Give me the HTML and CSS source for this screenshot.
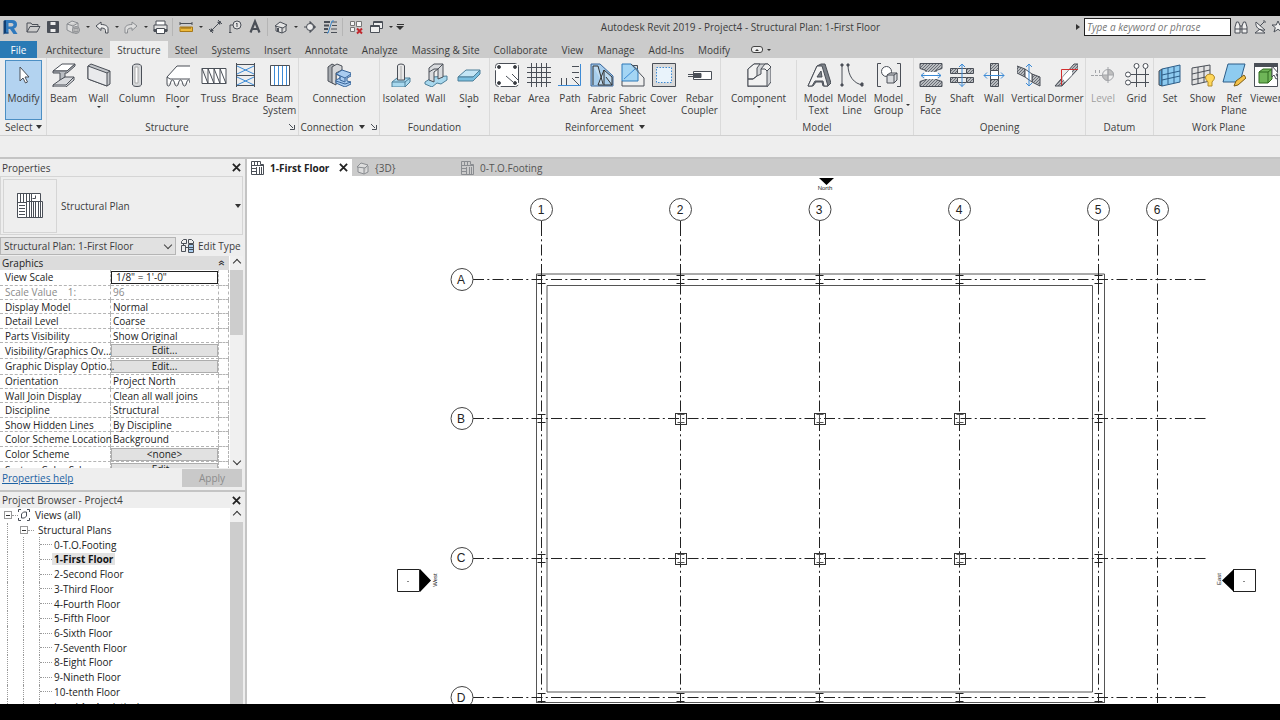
FILE: index.html
```html
<!DOCTYPE html>
<html lang="en">
<head>
<meta charset="utf-8">
<title>Autodesk Revit 2019 - Project4 - Structural Plan: 1-First Floor</title>
<link rel="stylesheet" href="styles.css">
</head>
<body>
<div class="app">
<header class="titlebar">
<div class="qat">
<button class="logo" aria-label="Application menu"><svg width="20" height="20" viewBox="0 0 20 20"><path d="M5 3h7q5 0 5 4.500 0 3-3 4l3.500 5.500h-4L10 12H8.500v4.500H5z" fill="#2f79bd"/><path d="M5 3L3.500 4v13.500L5 16.500h3.500v-1H6V4z" fill="#123f73"/><path d="M8.500 6h3q2 0 2 1.700t-2 1.700h-3z" fill="#cbcbcb"/></svg></button>
<button class="qb" aria-label="Open"><svg class="i" viewBox="0 0 20 20"><path d="M4 15V6h4l1 1.500h6V10M4 15l3-5.500h10L14 15z"/></svg></button>
<button class="qb" aria-label="Save"><svg class="i" viewBox="0 0 20 20"><path d="M4.500 4.500h11v11h-11z" fill="#4a4f57"/><path d="M7 4.500h6v4H7zM7 11.500h6v4H7z" fill="#eee"/></svg></button>
<button class="qb" aria-label="Synchronize"><svg class="i dim" viewBox="0 0 20 20"><path d="M4 7l5-3 6 2v8l-5 2-6-3zM4 7l6 2 5-3M10 9v7" fill="#ddd"/><circle cx="13" cy="13" r="3.500" fill="#bbb"/><path d="M11 12l2-1 2 1M11 14l2 1 2-1"/></svg></button>
<button class="drop" aria-label="Synchronize options"></button>
<button class="qb" aria-label="Undo"><svg class="i" viewBox="0 0 20 20"><path d="M4 9l5-4v2.500c5 0 7 2 7 4V16h-2.500v-2.500c0-2-2-2.500-4.500-2.500v2.500z" fill="#eee"/></svg></button>
<button class="drop" aria-label="Undo list"></button>
<button class="qb" aria-label="Redo"><svg class="i dim" viewBox="0 0 20 20"><path d="M16 9l-5-4v2.500c-5 0-7 2-7 4V16h2.500v-2.500c0-2 2-2.500 4.500-2.500v2.500z" fill="#ddd"/></svg></button>
<button class="drop" aria-label="Redo list"></button>
<button class="qb" aria-label="Print"><svg class="i" viewBox="0 0 20 20"><path d="M6 8V4h9v4" fill="#fff"/><path d="M4 8h13v6H4z" fill="#e4e4e4"/><path d="M4 12.500h13v2H4z" fill="#4a4f57"/><path d="M6.500 11.500h8v5h-8z" fill="#fff"/></svg></button>
<span class="qsep"></span>
<button class="qb" aria-label="Measure"><svg class="i" viewBox="0 0 20 20"><path d="M4 5v3M16 5v3M4 6.500h12"/><path d="M4 10h12.500v4.500H4z" fill="#edb93b" stroke="#a87918"/><path d="M6 10v2M8 10v2M10 10v2M12 10v2M14 10v2" stroke="#8a6212"/></svg></button>
<button class="drop" aria-label="Measure options"></button>
<button class="qb" aria-label="Aligned dimension"><svg class="i" viewBox="0 0 20 20"><path d="M6 14l9-9M4 12l4 4M13 3l4 4"/><path d="M5 15l1-4 3 3zM16 4l-1 4-3-3z" fill="#4a4f57" stroke="none"/></svg></button>
<button class="qb" aria-label="Tag by category"><svg class="i" viewBox="0 0 20 20"><circle cx="12" cy="8" r="4" fill="#e4e4e4"/><path d="M5 15V8h3M4 15.500h2.500M12 6v4M11 7l1-1"/></svg></button>
<button class="qb" aria-label="Text"><svg class="i" viewBox="0 0 20 20"><path d="M5.500 15.500L10 4.500l4.500 11M7.200 12h5.600" stroke-width="2.200"/></svg></button>
<span class="qsep"></span>
<button class="qb" aria-label="Default 3D view"><svg class="i" viewBox="0 0 20 20"><path d="M4 9l5-4 7 3-4 3zM5 9v5l6 2v-5M11 16l4-2V9" fill="#e3e3e3"/><path d="M7 11v4" stroke-width="2"/></svg></button>
<button class="drop" aria-label="3D view options"></button>
<button class="qb" aria-label="Section"><svg class="i" viewBox="0 0 20 20"><path d="M10 4.500v11l5.500-5.500zM4 10h3" fill="#4a4f57"/><circle cx="10" cy="10" r="3.500" fill="#eee"/></svg></button>
<button class="qb" aria-label="Thin lines"><svg class="i" viewBox="0 0 20 20"><path d="M4 5h6M4 8.500h5M4 12h4" stroke-width="2.200"/><path d="M4 15.500h4M12 5h5M12 8.500h5M11 12h6M11 15.500h6"/><path d="M14 4h-2L8 16h-1" stroke="#3c86c8"/></svg></button>
<span class="qsep"></span>
<button class="qb" aria-label="Close hidden windows"><svg class="i" viewBox="0 0 20 20"><path d="M4.500 4.500h4v4h-4zM10.500 4.500h5v5h-5zM4.500 10.500h4v4h-4z" fill="#f5f5f5" stroke="#777"/><path d="M11 11.500l5 5M16 11.500l-5 5" stroke="#c0272d" stroke-width="2"/></svg></button>
<button class="qb" aria-label="Switch windows"><svg class="i" viewBox="0 0 20 20"><path d="M7.500 8V4.500h9v7h-3M8 5.500h9" fill="#eee"/><path d="M4.500 8.500h9v7h-9zM4.500 9.500h9" fill="#eee"/></svg></button>
<button class="drop" aria-label="Window list"></button>
<button class="drop custom" aria-label="Customize toolbar"></button>
</div>
<h1 class="title">Autodesk Revit 2019 - Project4 - Structural Plan: 1-First Floor</h1>
<div class="info">
<span class="play"></span>
<input class="search" type="text" aria-label="Search" placeholder="Type a keyword or phrase">
<button class="qb" aria-label="Find"><svg class="i" viewBox="0 0 20 20"><path d="M4 16v-6l1.500-5h2L9 9v7zM11 16V9l1.500-4h2l1.500 5v6zM9 9h2M4 12h5M11 12h5M9 12h2" fill="#eee"/></svg></button>
<button class="qb" aria-label="Communication center"><svg class="i" viewBox="0 0 20 20"><path d="M6 5c-1 5 3 9 9 8zM10 9l4-4M5 16h10l-5-4zM13 4h2v2" fill="#eee"/></svg></button>
<button class="qb" aria-label="Favorites"><svg class="i" viewBox="0 0 20 20"><path d="M9 4l1.800 4H15l-3.300 2.600L13 15l-4-2.700L5 15l1.300-4.400L3 8h4.200z" fill="#eee"/></svg></button>
</div>
</header>
<nav class="tabs">
<button class="tab file">File</button><button class="tab">Architecture</button><button class="tab active">Structure</button><button class="tab">Steel</button><button class="tab">Systems</button><button class="tab">Insert</button><button class="tab">Annotate</button><button class="tab">Analyze</button><button class="tab">Massing &amp; Site</button><button class="tab">Collaborate</button><button class="tab">View</button><button class="tab">Manage</button><button class="tab">Add-Ins</button><button class="tab">Modify</button>
<button class="tab min" aria-label="Minimize ribbon"><span class="minbox"></span><span class="caret"></span></button>
</nav>
<section class="ribbon">
<div class="group g-select">
<div class="tools">
<button class="tool on"><svg class="i" viewBox="0 0 24 24"><path d="M8 4v14l3-3 2.500 5 2-1-2.500-5h4z" fill="#fff"/></svg>Modify</button>
</div>
<div class="gname">Select <span class="caret big"></span></div>
</div>
<div class="group g-structure">
<div class="tools">
<button class="tool"><svg class="i" viewBox="0 0 24 24"><path d="M1 8l9-7h13l-8 7z" fill="#fff"/><path d="M1 8v2h7v8l5-4v-4h2l8-7V1l-8 7z" fill="#b9bdc2"/><path d="M1 22l7-5 5-3h9v3l-8 7H1z" fill="#d9dbde"/><path d="M1 22h13l8-8"/></svg>Beam</button>
<button class="tool"><svg class="i" viewBox="0 0 24 24"><path d="M1 3l3-2 19 7v13l-3 2-19-7z" fill="#c3c6ca"/><path d="M1 3l19 7v13L1 16z" fill="#e9eaec"/><path d="M20 10l3-2"/></svg>Wall<span class="caret"></span></button>
<button class="tool"><svg class="i" viewBox="0 0 24 24"><path d="M7.500 4q0-3 4.500-3t4.500 3v17q0 2.500-4.500 2.500T7.500 21z" fill="#d6d8da"/><path d="M10 4h3v16h-3z" fill="#fff" stroke="#aaa"/></svg>Column</button>
<button class="tool"><svg class="i" viewBox="0 0 24 24"><path d="M1 14L11 3h13v17H1z" fill="#fff" stroke="none"/><path d="M24 3H11L1 14v7M1 14l3 2h20M1 21q0 2 1.500 2t2-3 2-3 2 3 2 3 2-3 2-3 2 3 2 3 2-3 2-3 1.500 3"/></svg>Floor<span class="caret"></span></button>
<button class="tool"><svg class="i wide" viewBox="0 0 26 24"><path d="M1 5.500h24v15H1zM1 5.500l6 15v-15l6 15v-15l6 15v-15l6 15" fill="#fff"/></svg>Truss</button>
<button class="tool"><svg class="i" viewBox="0 0 24 24"><path d="M3.500 0v24M21.500 0v24M3 1.500h18M3 12.500h18M3 22.500h18"/><path d="M4 3l17 8M21 3L4 11M4 14l17 8M21 14L4 22" class="b"/></svg>Brace</button>
<button class="tool"><svg class="i" viewBox="0 0 24 24"><path d="M2.500 2.500h19v20h-19z" fill="#fff"/><path d="M6.500 3v19M10.500 3v19M14.500 3v19M18.500 3v19" class="b"/></svg>Beam<br>System</button>
</div>
<div class="gname"><span class="grow">Structure</span><svg class="i launch" viewBox="0 0 8 8"><path d="M1 1l4 4M6.500 2v4.500H2"/></svg></div>
</div>
<div class="group g-connection">
<div class="tools">
<button class="tool"><svg class="i" viewBox="0 0 24 24"><path d="M1 4l4-3 4 2v18l-4-1-4-2z" fill="#a7abb0"/><path d="M5 4l5-3 5 2v4l-6 3v12l-4-2z" fill="#d5d7da"/><path d="M9 11l6-4 9 3v3l-4 2v3l4 1v2l-6 3-9-4v-3l4-2v-2z" fill="#a9ccf0" stroke="#38659a"/><path d="M9 11l9 4 6-4M13 14v3l5 2v-4M9 18l9 3 6-2" stroke="#38659a"/></svg>Connection</button>
</div>
<div class="gname"><span>Connection</span><span class="caret big"></span><svg class="i launch" viewBox="0 0 8 8"><path d="M1 1l4 4M6.500 2v4.500H2"/></svg></div>
</div>
<div class="group g-foundation">
<div class="tools">
<button class="tool"><svg class="i" viewBox="0 0 24 24"><path d="M3 19l5-4h13v4l-5 5H3z" fill="#a8d8ee" stroke="#4d7f99"/><path d="M3 19h13l5-4M16 19v5" stroke="#4d7f99"/><path d="M8.500 3q0-2 3.500-2t3.500 2v14H8.500z" fill="#e8e8e8"/><path d="M12 3v13" stroke="#aaa"/></svg>Isolated</button>
<button class="tool"><svg class="i" viewBox="0 0 24 24"><path d="M1 19l8-5 14-1v4l-6 4-4-1-5 4-7-3z" fill="#a8d8ee" stroke="#4d7f99"/><path d="M5 17V5l5-4h9v13l-5 2V6l-4 3v10z" fill="#d9dbde"/><path d="M14 6h-4l-5 3M14 6l5-5"/></svg>Wall</button>
<button class="tool"><svg class="i" viewBox="0 0 24 24"><path d="M1 14l8-7h14l-7 7z" fill="#c3e5f5" stroke="#4d7f99"/><path d="M1 14v4h15l7-7V7l-7 7z" fill="#79bfe0" stroke="#4d7f99"/></svg>Slab<span class="caret"></span></button>
</div>
<div class="gname">Foundation</div>
</div>
<div class="group g-reinforcement">
<div class="tools">
<button class="tool"><svg class="i" viewBox="0 0 24 24"><rect x=".5" y=".5" width="23" height="23" rx="3" fill="#fff" stroke-dasharray="18 2"/><g fill="#333"><circle cx="4" cy="4" r="1.500"/><circle cx="20" cy="4" r="1.500"/><circle cx="4" cy="20" r="1.500"/><circle cx="20" cy="20" r="1.500"/></g><path d="M11 13l7 6M17 11l6 6"/></svg>Rebar</button>
<button class="tool"><svg class="i" viewBox="0 0 24 24"><path d="M4.500 0v24M9.500 0v24M14.500 0v24M19.500 0v24M0 4.500h24M0 9.500h24M0 14.500h24M0 19.500h24"/></svg>Area</button>
<button class="tool"><svg class="i" viewBox="0 0 24 24"><path d="M0 22.500h22.500V1" class="b"/><path d="M3.500 22v-7M8.500 22v-7M14 15l7 7M21 3.500h-7M21 9.500h-7M21 14.500h-4"/></svg>Path</button>
<button class="tool"><svg class="i" viewBox="0 0 24 24"><path d="M1 1h9l13 12v10H1z" fill="#a7cdec" stroke="#38659a"/><path d="M3 3h5l5 18M3 3v19M8 22L14 7v15M14 7l8 7v8l-6-8M8 22h14" stroke="#333" fill="#d9e9f6" fill-opacity=".5"/></svg>Fabric<br>Area</button>
<button class="tool"><svg class="i" viewBox="0 0 24 24"><path d="M8.500 2.500h8v8" fill="#ddd"/><path d="M1 1h9l7 6v11H1z" fill="#a4d5f4" stroke="#2c78b8"/><path d="M3 16L14 6" class="b"/><path d="M1 18v5h22v-8L10 1"/></svg>Fabric<br>Sheet</button>
<button class="tool"><svg class="i" viewBox="0 0 24 24"><path d="M.5.500h23v23H.5z" fill="#d9d9d9"/><path d="M4.500 4.500h15v15h-15z" fill="#e9f3fb" class="b" stroke-dasharray="1.500 1.500"/></svg>Cover</button>
<button class="tool"><svg class="i" viewBox="0 0 24 24"><path d="M5.500 8.500h18v8h-18z" fill="#fff"/><path d="M0 11.500h8M0 13.500h8"/><path d="M6 10.500h7v4H6z" fill="#4a4f57"/></svg>Rebar<br>Coupler</button>
</div>
<div class="gname">Reinforcement <span class="caret big"></span></div>
</div>
<div class="group g-model">
<div class="tools">
<button class="tool component"><svg class="i" viewBox="0 0 24 24"><path d="M1 6l6-5h14l3 3v15l-4 5H1z" fill="#d2d4d7"/><path d="M1 6l6-5h6l-3 4v8l-4 3H1zM10 13l4-2V6l4-5h3l3 3-4 4v15H1v-7h5z" fill="#f2f2f2"/><path d="M14 6q5-1 6 2"/></svg>Component<span class="caret"></span></button>
<button class="tool"><svg class="i" viewBox="0 0 24 24"><path d="M10 3l4-2h4l6 19-3 3h-5l-1-4H9l-3 4H1z" fill="#7b8087"/><path d="M1 23L10 3h5l6 20h-4l-1-5H8l-3 5zM10 14h5l-1-6z" fill="#f3f3f3"/></svg>Model<br>Text</button>
<button class="tool"><svg class="i" viewBox="0 0 24 24"><path d="M2 2v20M8 2c0 11 6 19 15 20"/><path d="M1 1h2v2H1zM1 21h2v2H1zM7 1h2v2H7zM21 20h2v3h-2z" fill="#4a4f57"/></svg>Model<br>Line</button>
<button class="tool menu"><svg class="i" viewBox="0 0 24 24"><path d="M4 .5H.5v23H4M20 .5h3.500v23H20"/><circle cx="9.500" cy="8.500" r="5" fill="#fff"/><path d="M10 12l3-2h7v7l-3 3h-7z" fill="#d9dbde"/><path d="M10 12h7v8M17 12l3-2"/></svg>Model<br>Group<span class="caret"></span></button>
</div>
<div class="gname">Model</div>
</div>
<div class="group g-opening">
<div class="tools">
<button class="tool"><svg class="i" viewBox="0 0 24 24"><path d="M1 .5h22v5l-6 2v3H7v-3l-6-2zM1 23.500h22v-5l-6-2v-2H7v2l-6 2z" fill="url(#hatch)"/><path d="M6 9h12v7H6z" fill="#fff" stroke="none"/><path d="M2 12.500h20M5 10l-3 2.500L5 15M19 10l3 2.500-3 2.500" class="b"/></svg>By<br>Face</button>
<button class="tool"><svg class="i" viewBox="0 0 24 24"><path d="M.5 5.500h7v5h-7zM.5 14.500h7v5h-7zM16.500 5.500h7v5h-7zM16.500 14.500h7v5h-7z" fill="url(#hatch)"/><path d="M8 5.500h8M8 10.500h8M8 14.500h8M8 19.500h8"/><path d="M12 1v22.500M9 4l3-3 3 3M9 20.500l3 3 3-3" class="b"/></svg>Shaft</button>
<button class="tool"><svg class="i" viewBox="0 0 24 24"><path d="M8.500.5h8v7h-8zM8.500 16.500h8v7h-8z" fill="url(#hatch)"/><path d="M8.500 7.500h8v9h-8z" fill="#fff"/><path d="M2 12.500h20M5 9.500l-3 3 3 3M19 9.500l3 3-3 3" class="b"/></svg>Wall</button>
<button class="tool"><svg class="i" viewBox="0 0 24 24"><path d="M0 3l8 3v8l-8-4zM15 11l8 3v9l-8-4z" fill="url(#hatch)"/><path d="M8 6l7 5v8l-7-5z" fill="#fff"/><path d="M12 1v22M9 4l3-3 3 3M9 20l3 3 3-3" class="b"/></svg>Vertical</button>
<button class="tool"><svg class="i" viewBox="0 0 24 24"><path d="M1 23L20 1h4v5L8 23z" fill="url(#hatch)"/><path d="M8 15l7-8h3v5l-7 7z" fill="#fff" stroke="none"/><path d="M7.500 22V6.500H24" stroke="#d22f2f"/></svg>Dormer</button>
</div>
<div class="gname">Opening</div>
</div>
<div class="group g-datum">
<div class="tools">
<button class="tool" disabled><svg class="i" viewBox="0 0 24 24"><path d="M0 12.500h12M4.500 7v3M8.500 7v3" stroke-dasharray="3 1"/><circle cx="17" cy="12" r="5.500" fill="#eee"/><path d="M17 6.500V12h5.500A5.500 5.500 0 0 0 17 6.500zM17 17.500V12h-5.500A5.500 5.500 0 0 0 17 17.500z" fill="#888"/><path d="M17 4v16"/></svg>Level</button>
<button class="tool"><svg class="i" viewBox="0 0 24 24"><path d="M11.500 6v18M20.500 6v18M6 11.500h18M6 19.500h18"/><g fill="#fff"><circle cx="11.500" cy="3" r="2.500"/><circle cx="20.500" cy="3" r="2.500"/><circle cx="3" cy="11.500" r="2.500"/><circle cx="3" cy="19.500" r="2.500"/></g></svg>Grid</button>
</div>
<div class="gname">Datum</div>
</div>
<div class="group g-plane">
<div class="tools">
<button class="tool"><svg class="i" viewBox="0 0 24 24"><path d="M1 8l3-2v17l-3-1z" fill="#5aa5d6"/><path d="M4 6l18-4v17L4 23z" fill="#8ecbf0" stroke="#2c5d88"/><path d="M10 5v16M16 4v16M4 12l18-4M4 17l18-4" stroke="#2c5d88"/></svg>Set</button>
<button class="tool"><svg class="i" viewBox="0 0 24 24"><path d="M1 5l18-3v16L1 22z" fill="#e3e3e3"/><path d="M7 4v17M13 3v16M1 11l18-4M1 17l18-4"/><path d="M17 19q-3-3-2.500-5 1-3 4.500-3t4.500 3q.5 2-2.500 5v4h-4z" fill="#ffd75a" stroke="#b08a2a"/></svg>Show</button>
<button class="tool"><svg class="i" viewBox="0 0 24 24"><path d="M6 1h17l-5 18H1z" fill="#8ecbf0" stroke="#2c5d88"/><path d="M12 23l2-5 8-6 2 3-8 7z" fill="#f5c24a" stroke="#7b5c14"/></svg>Ref<br>Plane</button>
<button class="tool"><svg class="i" viewBox="0 0 24 24"><path d="M.5.500h23v23H.5z" fill="#fff"/><path d="M.5.500h23v3H.5z" fill="#4a4f57"/><path d="M5 9l4-3h9v10l-4 4H5z" fill="#6fb558" stroke="#2f6b1e"/><path d="M5 9h9v11M14 9l4-3" stroke="#2f6b1e"/><path d="M18 3v11l2-2 2 4 2-1-2-4h3z" fill="#fff"/></svg>Viewer</button>
</div>
<div class="gname">Work Plane</div>
</div>
</section>
<div class="optionsbar"></div>
<div class="work">
<aside class="dock">
<section class="panel">
<div class="phead"><h2>Properties</h2><button class="close" aria-label="Close Properties"><svg class="x" viewBox="0 0 10 10"><path d="M1 1l8 8M9 1L1 9"/></svg></button></div>
<button class="typesel"><span class="thumb"><svg class="i" width="26" height="26" viewBox="0 0 26 26"><path d="M.5.500h23v8h-23z" fill="#fff"/><path d="M.5.500h14v24H.5z" fill="#fff"/><path d="M0 9.500h14M3.500 1v8M6.500 1v8M9.500 1v8M12.500 1v8M2 12.500h6M2 15.500h6M2 18.500h6M2 21.500h6M15.500 5.500h3v-3"/><path d="M9.500 8.500h16v16h-16z" fill="#fff"/><path d="M12.500 9v15M14.500 9v15M16.500 9v15M18.500 9v15M21.500 9v15M23.500 9v15"/></svg></span><span class="grow">Structural Plan</span><span class="caret big"></span></button>
<div class="filter">
<span class="combowrap"><select class="combo" aria-label="Element filter"><option>Structural Plan: 1-First Floor</option></select></span>
<button class="edittype"><svg class="i" width="14" height="14" viewBox="0 0 14 14"><path d="M.5 2.500l2-2h3v4h-5zM7.500.500h3l2 2v2h-5zM.5 6.500h4v6h-4zM5 8.500h2M2.500 4v3"/><path d="M7.500 5.500h5v8h-5z" fill="#a9cdf0"/><path d="M8 8.500h4M8 10.500h4"/></svg>Edit Type</button>
</div>
<div class="scrollwrap props">
<div class="clip">
<table class="ptable">
<colgroup><col class="c1"><col class="c2"><col class="c3"></colgroup>
<thead><tr><th colspan="3"><span class="sect">Graphics<span class="fold">«</span></span></th></tr></thead>
<tbody>
<tr><td><label for="vs">View Scale</label></td><td><input id="vs" class="val sel" value="1/8&quot; = 1'-0&quot;"></td><td></td></tr>
<tr class="off"><td>Scale Value &nbsp;&nbsp; 1:</td><td>96</td><td></td></tr>
<tr><td>Display Model</td><td>Normal</td><td></td></tr>
<tr><td>Detail Level</td><td>Coarse</td><td></td></tr>
<tr><td>Parts Visibility</td><td>Show Original</td><td></td></tr>
<tr><td>Visibility/Graphics Ov...</td><td><button class="val">Edit...</button></td><td></td></tr>
<tr><td>Graphic Display Optio...</td><td><button class="val">Edit...</button></td><td></td></tr>
<tr><td>Orientation</td><td>Project North</td><td></td></tr>
<tr><td>Wall Join Display</td><td>Clean all wall joins</td><td></td></tr>
<tr><td>Discipline</td><td>Structural</td><td></td></tr>
<tr><td>Show Hidden Lines</td><td>By Discipline</td><td></td></tr>
<tr><td>Color Scheme Location</td><td>Background</td><td></td></tr>
<tr><td>Color Scheme</td><td><button class="val">&lt;none&gt;</button></td><td></td></tr>
<tr><td>System Color Schemes</td><td><button class="val">Edit...</button></td><td></td></tr>
</tbody>
</table>
</div>
<div class="sbar"><span class="arr up"></span><span class="knob"></span><span class="arr down"></span></div>
</div>
<div class="pfoot"><a href="#help">Properties help</a><button class="apply" disabled>Apply</button></div>
</section>
<section class="panel browser">
<div class="phead"><h2>Project Browser - Project4</h2><button class="close" aria-label="Close Project Browser"><svg class="x" viewBox="0 0 10 10"><path d="M1 1l8 8M9 1L1 9"/></svg></button></div>
<div class="scrollwrap">
<div class="clip">
<ul class="tree">
<li class="root"><span class="tog"></span><span class="dots"></span><svg class="i" width="12" height="12" viewBox="0 0 12 12"><path d="M.5 3V.500H3M9 .500h2.500V3M11.500 9v2.500H9M3 11.500H.5V9"/><path d="M3.500 5l2-2h3v4l-2 2h-3z"/></svg>Views (all)</li>
<li class="branch"><span class="g"></span><span class="tog"></span><span class="dots"></span>Structural Plans</li>
<li><span class="g"></span><span class="g"></span><span class="g h"></span><span class="n">0-T.O.Footing</span></li>
<li><span class="g"></span><span class="g"></span><span class="g h"></span><span class="n cur">1-First Floor</span></li>
<li><span class="g"></span><span class="g"></span><span class="g h"></span><span class="n">2-Second Floor</span></li>
<li><span class="g"></span><span class="g"></span><span class="g h"></span><span class="n">3-Third Floor</span></li>
<li><span class="g"></span><span class="g"></span><span class="g h"></span><span class="n">4-Fourth Floor</span></li>
<li><span class="g"></span><span class="g"></span><span class="g h"></span><span class="n">5-Fifth Floor</span></li>
<li><span class="g"></span><span class="g"></span><span class="g h"></span><span class="n">6-Sixth Floor</span></li>
<li><span class="g"></span><span class="g"></span><span class="g h"></span><span class="n">7-Seventh Floor</span></li>
<li><span class="g"></span><span class="g"></span><span class="g h"></span><span class="n">8-Eight Floor</span></li>
<li><span class="g"></span><span class="g"></span><span class="g h"></span><span class="n">9-Nineth Floor</span></li>
<li><span class="g"></span><span class="g"></span><span class="g h"></span><span class="n">10-tenth Floor</span></li>
<li><span class="g"></span><span class="g"></span><span class="g h"></span><span class="n">Level 1 - Analytical</span></li>
</ul>
</div>
<div class="sbar"><span class="arr up"></span><span class="knob full"></span></div>
</div>
</section>
</aside>
<main class="view">
<div class="doctabs">
<div class="doc current"><svg class="i" width="14" height="14" viewBox="0 0 14 14"><path d="M.5.500h9v3h3v10H.500zM1 4.500h11M3.500 1v3M6.500 1v3M1 7.500h4M1 10.500h4M5.500 6v7M8.500 6v7M10.500 6v7"/></svg><button class="name">1-First Floor</button><button class="close" aria-label="Close 1-First Floor"><svg class="x" viewBox="0 0 10 10"><path d="M1 1l8 8M9 1L1 9"/></svg></button></div>
<div class="doc"><svg class="i dim" width="14" height="14" viewBox="0 0 14 14"><path d="M1 6l4-4 7 2-3 3zM2 6v5l6 2V7M8 13l4-2V5" fill="#ddd"/></svg><button class="name">{3D}</button></div>
<div class="doc"><svg class="i dim" width="14" height="14" viewBox="0 0 14 14"><path d="M.5.500h9v3h3v10H.500zM1 4.500h11M3.500 1v3M6.500 1v3M1 7.500h4M1 10.500h4M5.500 6v7M8.500 6v7M10.500 6v7"/></svg><button class="name">0-T.O.Footing</button></div>
</div>
<svg class="canvas" role="img" aria-label="Structural plan, first floor">
<defs>
<pattern id="hatch" width="3" height="3" patternUnits="userSpaceOnUse"><rect width="3" height="3" fill="#b9bcc0"/><path d="M0 3L3 0" stroke="#6a6f76"/></pattern>
<g id="ibeam"><path d="M-4 -4h8M-4 4h8M0 -4v8"/></g>
<g id="col"><rect x="-5" y="-5" width="11" height="11" stroke="#333"/><path d="M-3 -4h7M-3 4h7M0 -4v8" stroke="#555"/></g>
</defs>
<g class="draw" transform="translate(-247 -176)">
<g class="wall"><path d="M536.500 703V274H1104.500V703M536.500 702.500H1104.500"/><path d="M547 692V285.500H1092.500V692z"/></g>
<g class="axis">
<path d="M541.500 225V703M680.500 225V703M819.500 225V703M959.500 225V703M1098.500 225V703M1157.500 225V703"/>
<path d="M473 279.500H1206M473 418.500H1206M473 558.500H1206M473 697.500H1206"/>
</g>
<path d="M541.500 221v5M680.500 221v5M819.500 221v5M959.500 221v5M1098.500 221v5M1157.500 221v5"/>
<g class="bub">
<circle cx="541.500" cy="209.500" r="11"/><circle cx="680.500" cy="209.500" r="11"/><circle cx="820" cy="209.500" r="11"/><circle cx="959.500" cy="209.500" r="11"/><circle cx="1098.500" cy="209.500" r="11"/><circle cx="1157.500" cy="209.500" r="11"/>
<circle cx="462" cy="279.500" r="11"/><circle cx="462" cy="418.500" r="11"/><circle cx="462" cy="558.500" r="11"/><circle cx="462" cy="697.500" r="11"/>
</g>
<g class="tag">
<text x="541" y="214">1</text><text x="680" y="214">2</text><text x="819" y="214">3</text><text x="959" y="214">4</text><text x="1098" y="214">5</text><text x="1157" y="214">6</text>
<text x="461" y="284">A</text><text x="461" y="423">B</text><text x="461" y="562">C</text><text x="461" y="702">D</text>
</g>
<g class="mem">
<use href="#ibeam" x="541.500" y="279.500"/><use href="#ibeam" x="680.500" y="279.500"/><use href="#ibeam" x="819.500" y="279.500"/><use href="#ibeam" x="959.500" y="279.500"/><use href="#ibeam" x="1098.500" y="279.500"/>
<use href="#ibeam" x="541.500" y="418.500"/><use href="#ibeam" x="1098.500" y="418.500"/><use href="#ibeam" x="541.500" y="558.500"/><use href="#ibeam" x="1098.500" y="558.500"/>
<use href="#ibeam" x="541.500" y="697.500"/><use href="#ibeam" x="680.500" y="697.500"/><use href="#ibeam" x="819.500" y="697.500"/><use href="#ibeam" x="959.500" y="697.500"/><use href="#ibeam" x="1098.500" y="697.500"/>
<use href="#col" x="680.500" y="418.500"/><use href="#col" x="819.500" y="418.500"/><use href="#col" x="959.500" y="418.500"/>
<use href="#col" x="680.500" y="558.500"/><use href="#col" x="819.500" y="558.500"/><use href="#col" x="959.500" y="558.500"/>
</g>
<path d="M397.500 569.500h22v22h-22zM1233.500 569.500h22v22h-22z"/>
<path stroke="#888" d="M407 581.500h2M1243 581.500h2"/>
<path class="solid" d="M819 178h15l-7.500 7zM420 569l11 11.500-11 11.500zM1234 569l-12 11.500 12 11.500z"/>
<g class="dir"><text x="825" y="190">North</text><text transform="translate(437 580) rotate(-90)">West</text><text transform="translate(1221 579) rotate(-90)">East</text></g>
</g>
</svg>
</main>
</div>
</div>
</body>
</html>
```
FILE: styles.css
```css
* { box-sizing: border-box; }
body {
  margin: 0;
  height: 100vh;
  padding: 16px 0;
  background: #000;
  color: #3c3c3c;
  font: 10px/12px "Open Sans", "Noto Sans", sans-serif;
  overflow: hidden;
}
button, input, select { font: inherit; color: inherit; margin: 0; padding: 0; border: 0; background: none; border-radius: 0; }
h1, h2 { margin: 0; font-size: 10px; font-weight: 400; }
svg { flex: none; display: block; }
.i { fill: none; stroke: #4a4f57; stroke-width: 1; }
.i .b { stroke: #3d8bd6; }
.i.dim { stroke: #8a8d91; }
.x { width: 9px; height: 9px; fill: none; stroke: #222; stroke-width: 2; }
.app { height: 100%; display: flex; flex-direction: column; background: #eee; overflow: hidden; }

.titlebar { display: flex; align-items: center; height: 22px; background: #cbcbcb; flex: none; }
.qat, .info { display: flex; align-items: center; flex: none; }
.logo { width: 23px; }
.qb { width: 20px; height: 20px; flex: none; }
.qb svg { width: 20px; height: 20px; }
.info .qb { width: 19px; }
.qsep { width: 2px; height: 18px; margin: 0 2px; border-left: 1px solid #b5b5b5; }
.drop { width: 9px; height: 20px; display: flex; align-items: center; justify-content: center; }
.drop::before, .caret { content: ""; flex: none; display: inline-block; border: 2px solid transparent; border-top-color: #333; border-bottom: 0; }
.caret.big { border-width: 3px 3px 0; border-top-width: 4px; }
.drop.custom { flex-direction: column; gap: 1px; width: 10px; }
.drop.custom::before { border-width: 4px 4px 0; order: 1; }
.drop.custom::after { content: ""; width: 7px; height: 1px; background: #333; }
.title { flex: 1; text-align: center; white-space: nowrap; }
.play { border: 3px solid transparent; border-left: 4px solid #333; border-right: 0; margin-right: 4px; flex: none; }
.search { width: 147px; height: 18px; flex: none; border: 1px solid #222; background: #fff; padding: 0 2px; }
.search::placeholder { color: #777; font-style: italic; opacity: 1; }
.info { overflow: hidden; width: 204px; }

.tabs { display: flex; align-items: flex-end; height: 20px; background: #cbcbcb; flex: none; }
.tab { height: 17px; padding: 0 7px; white-space: nowrap; }
.tab.file { width: 37px; margin-right: 2px; background: #2a7ab5; color: #fff; }
.tab.active { background: #eee; }
.tab.min { display: flex; align-items: center; gap: 4px; padding: 0 14px; }
.minbox { width: 12px; height: 7px; border: 1px solid #444; border-radius: 3px; background: #eee; display: flex; align-items: center; justify-content: center; }
.minbox::before { content: ""; border: 2px solid transparent; border-top: 0; border-bottom-color: #333; }

.ribbon { display: flex; flex: none; border-bottom: 1px solid #d0d0d0; overflow: hidden; }
.group { flex: none; border-right: 1px solid #dadada; padding: 2px 0 1px; display: flex; flex-direction: column; }
.tools { display: grid; }
.tool { display: flex; flex-direction: column; align-items: center; justify-content: flex-start; height: 60px; padding-top: 3px; min-width: 0; white-space: nowrap; text-align: center; line-height: 12px; position: relative; }
.tool svg { width: 24px; height: 24px; margin-bottom: 5px; }
.tool svg.wide { width: 26px; }
.tool .caret { margin-top: 2px; }
.tool.menu .caret { position: absolute; right: 3px; top: 42px; }
.tool.on { width: 37px; margin-left: 5px; border: 1px solid #4c8fc4; background: #b3d3f0; padding-top: 2px; }
.tool:disabled { opacity: .45; }
.gname { display: flex; align-items: center; justify-content: center; gap: 5px; height: 14px; }
.grow { flex: 1; }
.gname .grow { text-align: center; }
.launch { width: 8px; height: 8px; }
.g-select { width: 47px; }
.g-select .gname { justify-content: flex-start; padding-left: 5px; gap: 3px; }
.g-structure .tools { grid-template-columns: 33px 37px 40px 41px 31px 32px 37px; }
.g-structure .gname { padding: 0 2px 0 4px; }
.g-connection .tools { grid-template-columns: 80px; }
.g-foundation .tools { grid-template-columns: 42px 27px 40px; }
.g-reinforcement .tools { grid-template-columns: 34px 30px 32px 31px 31px 31px 41px; }
.g-model .tools { grid-template-columns: 76px 43px 24px 49px; }
.g-model .component { border-right: 1px solid #dadada; }
.g-opening .tools { grid-template-columns: 33px 30px 34px 35px 39px; }
.g-datum .tools { grid-template-columns: 34px 33px; }
.g-plane .tools { grid-template-columns: 32px 33px 30px 34px; }
.optionsbar { height: 23px; flex: none; border-bottom: 2px solid #c4c4c4; }

.work { flex: 1; display: flex; min-height: 0; }
.dock { width: 247px; flex: none; display: flex; flex-direction: column; border-right: 2px solid #c4c4c4; min-height: 0; }
.panel { flex: none; padding-right: 2px; }
.phead { display: flex; align-items: center; justify-content: space-between; height: 17px; padding: 0 0 0 2px; }
.close { width: 13px; height: 13px; display: flex; align-items: center; justify-content: center; }
.typesel { display: flex; align-items: center; width: 100%; height: 59px; border: 1px solid #d5d5d5; padding: 0 1px 0 2px; gap: 4px; text-align: left; }
.thumb { width: 54px; height: 54px; border: 1px solid #d5d5d5; display: flex; align-items: center; justify-content: center; }
.filter { display: flex; align-items: center; height: 21px; gap: 5px; }
.combowrap { position: relative; display: flex; }
.combowrap::after { content: ""; position: absolute; right: 5px; top: 5px; width: 5px; height: 5px; border: solid #444; border-width: 0 1px 1px 0; transform: rotate(45deg); pointer-events: none; }
.combo { appearance: none; width: 176px; height: 18px; border: 1px solid #b5b5b5; background: #e1e1e1; padding: 0 3px; }
.edittype { display: flex; align-items: center; gap: 3px; white-space: nowrap; }
.scrollwrap { display: flex; background: #fff; overflow: hidden; }
.props { height: 212px; }
.clip { flex: 1; min-width: 0; overflow: hidden; }
.ptable { border-collapse: separate; border-spacing: 0; table-layout: fixed; width: 229px; height: 222px; color: #222; }
.ptable .c1 { width: 111px; }
.ptable .c2 { width: 108px; }
.ptable .c3 { width: 10px; }
.ptable th { height: 14px; padding: 0 4px 0 2px; background: #dcdcdc; font-weight: 400; text-align: left; line-height: 12px; }
.sect { display: flex; justify-content: space-between; }
.fold { transform: rotate(90deg); font-size: 12px; }
.ptable td { padding: 0 0 0 2px; line-height: 12px; border-bottom: 1px dashed #b4b4b4; border-right: 1px dashed #b4b4b4; white-space: nowrap; }
.ptable td:first-child { padding-left: 5px; }
.off { color: #8a8a8a; }
.ptable td:has(.val) { padding: 0; }
.val { display: block; width: 107px; height: 13px; line-height: 11px; background: #e1e1e1; border: 1px solid #adadad; }
.val.sel { background: #fff; border-color: #222; padding-left: 4px; }
.sbar { width: 13px; flex: none; display: flex; flex-direction: column; background: #f0f0f0; }
.arr { height: 14px; display: flex; align-items: center; justify-content: center; }
.arr::before { content: ""; width: 5px; height: 5px; border: solid #333; border-width: 1px 0 0 1px; transform: rotate(45deg); }
.arr.down { margin-top: auto; }
.arr.down::before { transform: rotate(225deg); }
.knob { height: 65px; background: #cdcdcd; }
.knob.full { height: auto; flex: 1; }
.pfoot { display: flex; align-items: center; justify-content: space-between; height: 22px; padding: 0 1px 2px 2px; }
.pfoot a { color: #1c62a3; }
.apply { width: 60px; height: 18px; background: #c9c9c9; color: #8c8c8c; }
.browser { flex: 1; display: flex; flex-direction: column; min-height: 0; border-top: 2px solid #c4c4c4; }
.browser .phead { flex: none; height: 16px; }
.browser .scrollwrap { flex: 1; min-height: 0; }
.tree { list-style: none; margin: 0; padding: 0; height: 206px; display: grid; grid-auto-rows: 1fr; color: #222; }
.tree li { display: flex; align-items: center; padding-left: 7px; white-space: nowrap; min-height: 0; }
.tree .root { padding-left: 4px; }
.root svg { margin-right: 5px; }
.g { width: 16px; align-self: stretch; border-left: 1px dotted #999; }
.g.h { width: 13px; display: flex; align-items: center; }
.g.h::before { content: ""; flex: 1; border-top: 1px dotted #999; }
.branch .g { width: 13px; }
.tog { width: 8px; height: 8px; border: 1px solid #999; display: flex; align-items: center; }
.tog::before { content: ""; flex: 1; height: 1px; margin: 0 1px; background: #333; }
.dots { width: 6px; border-top: 1px dotted #999; }
.branch .dots { margin-right: 4px; }
.n { padding: 0 2px; }
.cur { background: #e2e2e2; font-weight: 700; color: #111; }

.view { flex: 1; min-width: 0; display: flex; flex-direction: column; background: #fff; }
.doctabs { display: flex; height: 17px; flex: none; background: #cbcbcb; }
.doc { width: 105px; display: flex; align-items: center; padding: 0 2px 0 4px; gap: 5px; color: #555; }
.doc .name { flex: 1; text-align: left; white-space: nowrap; }
.doc.current { background: #fff; color: #222; font-weight: 700; }
.canvas { flex: 1; width: 100%; min-height: 0; }
.draw { fill: none; stroke: #222; stroke-width: 1; font-family: "Liberation Sans", Arial, sans-serif; }
.wall { stroke: #555; }
.axis { stroke-dasharray: 11 3.300 2 3.200; }
.bub { fill: #fff; stroke: #444; }
.draw text { fill: #222; stroke: none; text-anchor: middle; }
.tag { font-size: 12px; }
.dir { font-size: 6px; }
.solid { fill: #000; stroke: none; }
```
